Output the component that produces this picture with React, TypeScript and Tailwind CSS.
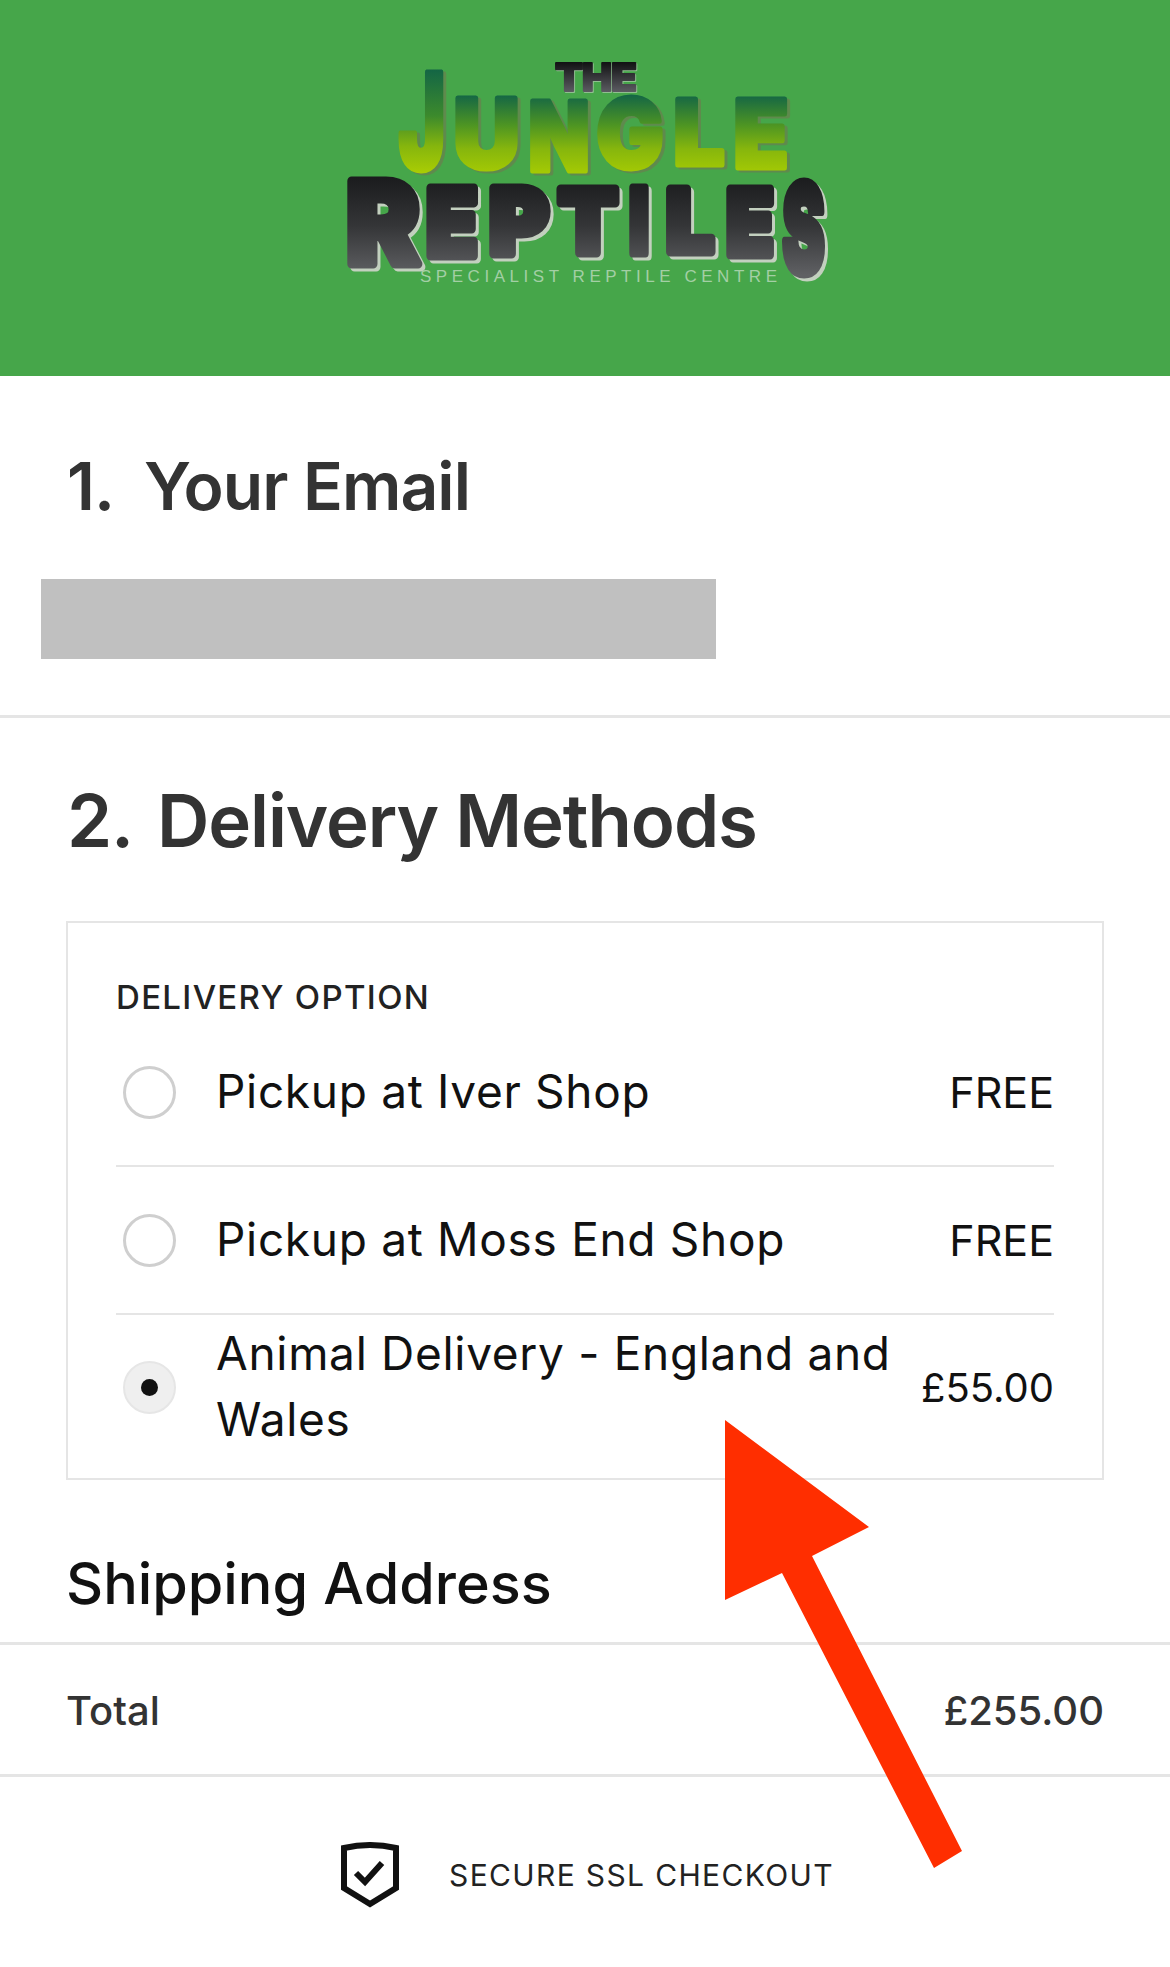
const FONT = "font-['Inter','Liberation_Sans',sans-serif]";

interface DeliveryOption {
  label: string;
  price: string;
  selected?: boolean;
}

interface LogoLetter {
  c: string;
  l: number;
  r: number;
  t: number;
  b: number;
}

const options: DeliveryOption[] = [
  { label: "Pickup at Iver Shop", price: "FREE" },
  { label: "Pickup at Moss End Shop", price: "FREE" },
  { label: "Animal Delivery - England and Wales", price: "£55.00", selected: true },
];

// each logo letter is placed by the box it fills in the picture
const jungle: LogoLetter[] = [
  { c: "U", l: 453, r: 520, t: 95, b: 170 },
  { c: "N", l: 528, r: 590, t: 98, b: 173 },
  { c: "G", l: 596, r: 664, t: 95, b: 170 },
  { c: "L", l: 673, r: 725, t: 96, b: 167 },
  { c: "E", l: 733, r: 789, t: 96, b: 170 },
];

const reptiles: LogoLetter[] = [
  { c: "R", l: 344, r: 422, t: 176, b: 268 },
  { c: "E", l: 424, r: 480, t: 183, b: 260 },
  { c: "P", l: 487, r: 551, t: 183, b: 258 },
  { c: "T", l: 556, r: 620, t: 184, b: 257 },
  { c: "I", l: 627, r: 651, t: 183, b: 257 },
  { c: "L", l: 664, r: 716, t: 184, b: 256 },
  { c: "E", l: 724, r: 776, t: 184, b: 259 },
  { c: "S", l: 780, r: 827, t: 178, b: 277 },
];

function LogoGlyph({ letter, fill, stroke }: { letter: LogoLetter; fill: string; stroke: number }) {
  const { c, l, r, t, b } = letter;
  return (
    <text
      x={l + stroke / 2 - 2}
      y={b - stroke / 2}
      textLength={r - l - stroke + 4}
      lengthAdjust="spacingAndGlyphs"
      fontSize={(b - t - stroke) / 0.727}
      fontFamily="Inter, sans-serif"
      fontWeight={900}
      fill={fill}
      stroke={fill}
      strokeWidth={stroke}
      strokeLinejoin="round"
    >
      {c}
    </text>
  );
}

function Logo() {
  return (
    <svg viewBox="330 50 510 240" className="block w-[510px] h-[240px] overflow-visible">
      <defs>
        <linearGradient id="jt" gradientUnits="userSpaceOnUse" x1="0" y1="70" x2="0" y2="172">
          <stop offset="0" stopColor="#146645" />
          <stop offset="0.45" stopColor="#3c8a2c" />
          <stop offset="0.75" stopColor="#86b60d" />
          <stop offset="1" stopColor="#a8cc04" />
        </linearGradient>
        <linearGradient id="jg" gradientUnits="userSpaceOnUse" x1="0" y1="95" x2="0" y2="172">
          <stop offset="0" stopColor="#146645" />
          <stop offset="0.4" stopColor="#4f9622" />
          <stop offset="0.7" stopColor="#86b60d" />
          <stop offset="1" stopColor="#a3c904" />
        </linearGradient>
        <linearGradient id="rp" gradientUnits="userSpaceOnUse" x1="0" y1="176" x2="0" y2="275">
          <stop offset="0" stopColor="#1a1b1d" />
          <stop offset="0.5" stopColor="#343537" />
          <stop offset="1" stopColor="#5f6063" />
        </linearGradient>
        <linearGradient id="th" gradientUnits="userSpaceOnUse" x1="0" y1="61" x2="0" y2="92">
          <stop offset="0" stopColor="#0e0e10" />
          <stop offset="1" stopColor="#5c5c62" />
        </linearGradient>
      </defs>
      <g className="drop-shadow-[1px_1px_0_#8fbf8f]">
        <LogoGlyph letter={{ c: "T", l: 556, r: 582, t: 62, b: 92 }} fill="url(#th)" stroke={2} />
        <LogoGlyph letter={{ c: "H", l: 583, r: 611, t: 62, b: 92 }} fill="url(#th)" stroke={2} />
        <LogoGlyph letter={{ c: "E", l: 612, r: 636, t: 62, b: 92 }} fill="url(#th)" stroke={2} />
      </g>
      <g className="drop-shadow-[3px_2px_0_#5f8a4d]">
        <LogoGlyph letter={{ c: "J", l: 398, r: 446, t: 69, b: 172 }} fill="url(#jt)" stroke={5} />
        {jungle.map((l) => (
          <LogoGlyph key={l.l} letter={l} fill="url(#jg)" stroke={5} />
        ))}
      </g>
      <g className="drop-shadow-[3px_3px_0_#c3d0bf]">
        {reptiles.map((l) => (
          <LogoGlyph key={l.l} letter={l} fill="url(#rp)" stroke={9} />
        ))}
      </g>
      <text
        x={420}
        y={282}
        textLength={357}
        fontSize={17}
        fontFamily="'Liberation Sans', sans-serif"
        fill="#a3cfa5"
      >
        SPECIALIST REPTILE CENTRE
      </text>
    </svg>
  );
}

function Radio({ selected }: { selected?: boolean }) {
  return selected ? (
    <span className="flex justify-center items-center w-[53px] h-[53px] shrink-0 rounded-full bg-[#efefef] border-2 border-[#e6e6e6]">
      <span className="w-[17px] h-[17px] rounded-full bg-[#111]" />
    </span>
  ) : (
    <span className="block w-[53px] h-[53px] shrink-0 rounded-full bg-white border-[3px] border-[#cfcfcf]" />
  );
}

function Shield() {
  return (
    <svg viewBox="0 0 58 66" className="w-[58px] h-[66px] shrink-0" fill="none" stroke="#111" strokeWidth="6">
      <path d="M3 6 Q29 0 55 6 V46 L29 62 L3 46 Z" />
      <path d="M15 31 L24 40 L41 21" />
    </svg>
  );
}

export default function App() {
  return (
    <div className={`relative h-[1967px] bg-white overflow-hidden ${FONT}`}>
      <header className="flex justify-center h-[376px] pt-[50px] bg-[#46a64a]">
        <Logo />
      </header>

      <section className="h-[342px] pt-[74px] border-b-[3px] border-[#e5e5e5]">
        <h2 className="flex pl-[67px] text-[66px] leading-[72px] font-semibold tracking-[-0.015em] text-[#333]">
          <span className="w-[77px]">1.</span>
          <span>Your Email</span>
        </h2>
        <div className="ml-[41px] mt-[57px] w-[675px] h-[80px] bg-[#c0c0c0]" />
      </section>

      <section className="px-[66px] pt-[63px]">
        <h2 className="flex pl-[1px] text-[72.5px] leading-[80px] font-semibold tracking-[-0.015em] text-[#333]">
          <span className="w-[90px]">2.</span>
          <span>Delivery Methods</span>
        </h2>
        <div className="mt-[60px] h-[559px] px-[48px] pt-[54px] border-2 border-[#e5e5e5]">
          <div className="text-[33px] leading-[40px] font-medium tracking-[0.04em] text-[#222]">DELIVERY OPTION</div>
          {options.map((o, i) => (
            <div
              key={o.label}
              className={`flex items-center pl-[7px] ${i === 0 ? "h-[152px] -mt-[2px] pt-[4px]" : ""} ${i === 1 ? "h-[148px]" : ""} ${i === 2 ? "h-[146px] pb-[1px]" : ""} ${i < 2 ? "border-b-2 border-[#e5e5e5]" : ""}`}
            >
              <Radio selected={o.selected} />
              <span className="flex-1 pl-[40px] pr-[14px] pb-[3px] text-[46px] leading-[66px] tracking-[0.015em] text-[#111]">
                {o.label}
              </span>
              <span className={`text-[#111] ${o.selected ? "text-[40px]" : "text-[43px]"}`}>{o.price}</span>
            </div>
          ))}
        </div>
        <h3 className="mt-[71px] text-[57.5px] leading-[64px] font-medium text-[#111]">Shipping Address</h3>
      </section>

      <div className="flex justify-between items-center mt-[27px] h-[135px] px-[66px] pt-[2px] border-y-[3px] border-[#e5e5e5] text-[40px] font-medium text-[#333]">
        <span>Total</span>
        <span>£255.00</span>
      </div>

      <div className="flex justify-center items-center gap-[50px] mt-[65px] pl-[5px]">
        <Shield />
        <span className="text-[30px] tracking-[0.045em] text-[#222]">SECURE SSL CHECKOUT</span>
      </div>

      {/* red annotation arrow sits on top of the page */}
      <svg viewBox="0 0 1170 1967" className="absolute inset-0 w-[1170px] h-[1967px] pointer-events-none">
        <polygon points="725,1420 869,1527 812,1556 962,1851 934,1868 782,1573 725,1600" fill="#ff2e00" />
      </svg>
    </div>
  );
}
